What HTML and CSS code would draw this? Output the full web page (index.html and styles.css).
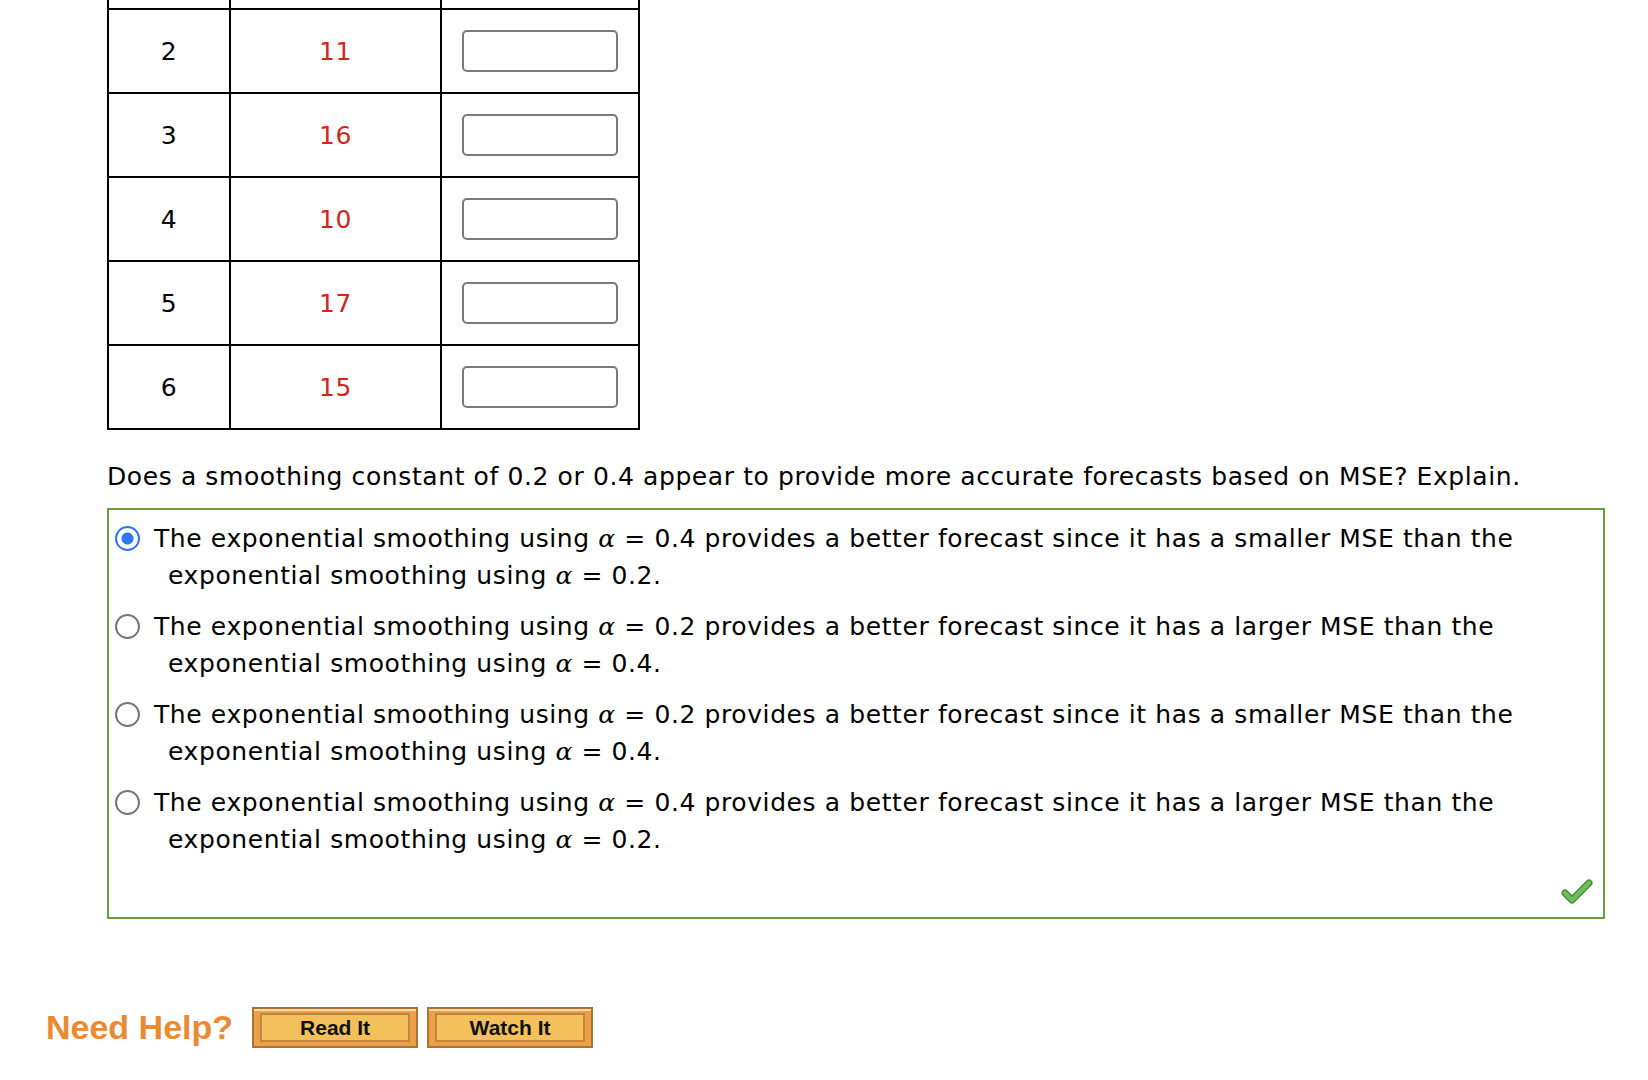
FILE: index.html
```html
<!DOCTYPE html>
<html lang="en">
<head>
    <meta charset="UTF-8">
    <title>Exponential Smoothing - MSE</title>
    <link rel="stylesheet" href="styles.css">
</head>
<body>
    <div class="page">
        <section class="question">
            <table class="data-table">
                <tr><td></td><td class="given"></td><td><input type="text" class="answer"></td></tr>
                <tr><td>2</td><td class="given">11</td><td><input type="text" class="answer"></td></tr>
                <tr><td>3</td><td class="given">16</td><td><input type="text" class="answer"></td></tr>
                <tr><td>4</td><td class="given">10</td><td><input type="text" class="answer"></td></tr>
                <tr><td>5</td><td class="given">17</td><td><input type="text" class="answer"></td></tr>
                <tr><td>6</td><td class="given">15</td><td><input type="text" class="answer"></td></tr>
            </table>

            <p class="prompt">Does a smoothing constant of 0.2 or 0.4 appear to provide more accurate forecasts based on MSE? Explain.</p>

            <div class="choices">
                <label class="choice">
                    <input type="radio" name="mse" checked>
                    <span class="choice-text">The exponential smoothing using <i class="alpha">α</i> = 0.4 provides a better forecast since it has a smaller MSE than the<br>exponential smoothing using <i class="alpha">α</i> = 0.2.</span>
                </label>
                <label class="choice">
                    <input type="radio" name="mse">
                    <span class="choice-text">The exponential smoothing using <i class="alpha">α</i> = 0.2 provides a better forecast since it has a larger MSE than the<br>exponential smoothing using <i class="alpha">α</i> = 0.4.</span>
                </label>
                <label class="choice">
                    <input type="radio" name="mse">
                    <span class="choice-text">The exponential smoothing using <i class="alpha">α</i> = 0.2 provides a better forecast since it has a smaller MSE than the<br>exponential smoothing using <i class="alpha">α</i> = 0.4.</span>
                </label>
                <label class="choice">
                    <input type="radio" name="mse">
                    <span class="choice-text">The exponential smoothing using <i class="alpha">α</i> = 0.4 provides a better forecast since it has a larger MSE than the<br>exponential smoothing using <i class="alpha">α</i> = 0.2.</span>
                </label>
                <div class="mark">
                    <svg width="32" height="28" viewBox="0 0 32 28">
                        <path d="M4 16 L11 23 L28 6" fill="none" stroke="#3f8a34" stroke-width="7" stroke-linecap="round" stroke-linejoin="round"/>
                        <path d="M4 16 L11 23 L28 6" fill="none" stroke="#6cbf5c" stroke-width="4.5" stroke-linecap="round" stroke-linejoin="round"/>
                    </svg>
                </div>
            </div>
        </section>

        <div class="help">
            <span class="help-title">Need Help?</span>
            <button class="help-btn"><span>Read It</span></button>
            <button class="help-btn"><span>Watch It</span></button>
        </div>
    </div>
</body>
</html>
```

FILE: styles.css
```css
* { margin: 0; padding: 0; box-sizing: border-box; }
body { font-family: "DejaVu Sans", Verdana, sans-serif; background: #fff; color: #000; overflow: hidden; }
.page { padding-left: 46px; }
.question { margin-left: 61px; }

.data-table { border-collapse: collapse; margin-top: -76px; font-size: 25px; letter-spacing: 0.6px; }
.data-table td { border: 2px solid #000; height: 84px; text-align: center; vertical-align: middle; padding: 0; }
.data-table td:nth-child(1) { width: 122px; }
.data-table td:nth-child(2) { width: 211px; }
.data-table td:nth-child(3) { width: 196px; padding: 0 20px 0 20px; }
.data-table .given { color: #d0261c; }
.answer { display: block; width: 156px; height: 42px; border: 2px solid #7a7a7a; border-radius: 5px; background: #fff; }

.prompt { font-size: 25px; letter-spacing: 0.6px; line-height: 37px; margin-top: 28px; }

.choices { width: 1498px; margin-top: 13px; border: 2px solid #6a9e3e; padding: 10px 0 0 6px; }
.choice { display: flex; align-items: flex-start; font-size: 25px; letter-spacing: 0.6px; line-height: 37px; margin-bottom: 14px; }
.choice input { appearance: none; -webkit-appearance: none; flex: none; width: 25px; height: 25px; margin-top: 6px; border: 2px solid #767676; border-radius: 50%; background: #fff; }
.choice input:checked { border-color: #2f76f2; background: radial-gradient(circle, #2f76f2 0 5.5px, #fff 6.5px); }
.choice-text { margin-left: 28px; text-indent: -14px; }
.alpha { font-family: "DejaVu Serif", serif; font-style: italic; }
.mark { display: flex; justify-content: flex-end; padding: 5px 10px 12px 0; }

.help { display: flex; align-items: center; margin-top: 88px; }
.help-title { font-family: "Liberation Sans", Arial, sans-serif; font-weight: bold; font-size: 34px; color: #e98b34; margin-right: 19px; }
.help-btn { display: flex; width: 166px; height: 41px; margin-right: 9px; padding: 4px 6px 4px 6px; border: 2px solid #a9733a; background: linear-gradient(#f9d9a6 0 2px, #eda046 2px); font-family: "Liberation Sans", Arial, sans-serif; font-weight: bold; font-size: 21px; color: #111; }
.help-btn span { flex: 1; display: flex; align-items: center; justify-content: center; border: 2px solid #bd8644; background: #f3c05c; }
```
